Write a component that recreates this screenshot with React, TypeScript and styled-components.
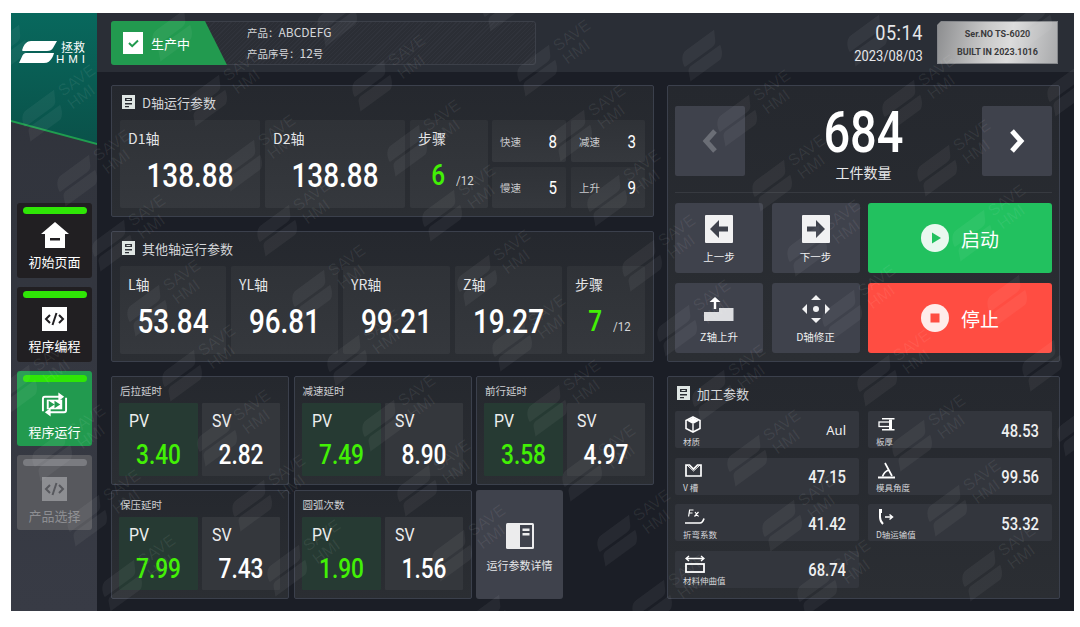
import React from "react";
import styled, { createGlobalStyle } from "styled-components";

const GlobalStyle = createGlobalStyle`
  * { box-sizing: border-box; }
  html, body { margin: 0; padding: 0; background: #fff; }
  body { font-family: "Noto Sans CJK SC", "Noto Sans", sans-serif; }
`;

const NUM = `"Roboto", "Liberation Sans", sans-serif`;
const GREEN_TEXT = "#42f005";

const Frame = styled.div`
  position: relative;
  display: flex;
  width: 1063px;
  height: 598px;
  margin: 13px 0 0 11px;
  overflow: hidden;
  background: #1b1e26;
  color: #fff;
`;

const Sidebar = styled.aside`
  width: 86px;
  flex: none;
  background: linear-gradient(180deg, #2f323a 0%, #383b45 100%);
`;

const SideTopLine = styled.div`
  height: 132px;
  background: #1f9d4f;
  clip-path: polygon(0 0, 100% 0, 100% 100%, 0 82.6%);
`;

const SideTop = styled.div`
  height: 100%;
  padding: 28px 0 0 8px;
  background: linear-gradient(180deg, #08685d 0%, #0a5149 100%);
  clip-path: polygon(0 0, 100% 0, 100% calc(100% - 2px), 0 calc(82.6% - 2px));
`;

const Logo = styled.div`
  display: flex;
  align-items: flex-start;
`;

const LogoText = styled.div`
  display: flex;
  flex-direction: column;
  width: 28px;
  margin-top: -1px;
  align-items: flex-end;
`;

const LogoCn = styled.span`
  font-size: 12px;
  line-height: 14px;
  white-space: nowrap;
`;

const LogoEn = styled.span`
  font-family: "Liberation Sans", sans-serif;
  font-size: 11.5px;
  line-height: 10px;
  letter-spacing: 4px;
  margin-right: -4px;
`;

const NavList = styled.nav`
  display: flex;
  flex-direction: column;
  gap: 9px;
  margin-top: 58px;
  padding-left: 6px;
`;

const NavItem = styled.div<{ $kind: "dark" | "active" | "off" }>`
  width: 75px;
  height: 75px;
  padding-top: 4px;
  border-radius: 3px;
  display: flex;
  flex-direction: column;
  align-items: center;
  background: ${(p) =>
    p.$kind === "active" ? "#229a4f" : p.$kind === "off" ? "#57585d" : "#211f22"};
  color: ${(p) => (p.$kind === "off" ? "#8d8e92" : "#fff")};
`;

const NavBar = styled.div<{ $off?: boolean }>`
  width: 64px;
  height: 7px;
  border-radius: 4px;
  background: ${(p) => (p.$off ? "#7a7b80" : "#2fe606")};
`;

const NavIcon = styled.div<{ $low?: boolean }>`
  height: 27px;
  margin-top: ${(p) => (p.$low ? 9 : 7)}px;
  display: flex;
  align-items: center;
  justify-content: center;
`;

const NavLabel = styled.div`
  font-size: 13px;
  line-height: 16px;
  margin-top: 6px;
`;

const Main = styled.div`
  flex: 1;
  min-width: 0;
`;

const Header = styled.header`
  height: 59px;
  background: #2a2e36;
  display: flex;
  align-items: flex-start;
  padding: 8px 16px 0 14px;
`;

const Status = styled.div`
  width: 425px;
  height: 44px;
  display: flex;
  align-items: center;
  border: 1px solid #3c4049;
  border-radius: 3px;
  background: repeating-linear-gradient(135deg, #30333b 0 1px, #2b2e35 1px 3px);
`;

const StatusTag = styled.div`
  width: 116px;
  height: 44px;
  margin: 0 0 0 -1px;
  padding-left: 12px;
  flex: none;
  display: flex;
  align-items: center;
  gap: 8px;
  font-size: 13px;
  background: #229a4f;
  border-radius: 3px 0 0 3px;
  clip-path: polygon(0 0, 81% 0, 100% 100%, 0 100%);
`;

const Check = styled.div`
  width: 20px;
  height: 22px;
  background: #fff;
  display: flex;
  align-items: center;
  justify-content: center;
`;

const StatusInfo = styled.div`
  margin-left: 20px;
  font-size: 10.5px;
  line-height: 20px;
  color: #d6d7da;
`;

const InfoLatin = styled.span`
  font-size: 12px;
`;

const Clock = styled.div`
  margin-left: auto;
  text-align: right;
  font-family: ${NUM};
  color: #e6e7ea;
`;

const Time = styled.div`
  font-size: 21px;
  line-height: 24px;
  letter-spacing: 0.6px;
  transform: scaleX(0.86);
  transform-origin: right center;
`;

const DateText = styled.div`
  font-size: 15px;
  line-height: 19px;
  margin-top: 2px;
  transform: scaleX(0.86);
  transform-origin: right center;
`;

const Badge = styled.div`
  width: 121px;
  height: 43px;
  margin-left: 14px;
  display: flex;
  flex-direction: column;
  justify-content: center;
  align-items: center;
  font-family: ${NUM};
  font-weight: 700;
  font-size: 9px;
  line-height: 18px;
  color: #3a3a3c;
  border: 1px solid #85878b;
  background: linear-gradient(100deg, #8d8e90 0%, #c9c9c9 40%, #dcdcdc 60%, #a9aaac 100%);
  clip-path: polygon(4px 0, 100% 0, 100% 100%, 0 100%, 0 4px);
`;

const Content = styled.main`
  display: flex;
  gap: 13px;
  padding: 13px 14px 0 14px;
`;

const LeftCol = styled.div`
  width: 543px;
  flex: none;
  display: flex;
  flex-direction: column;
  gap: 14px;
`;

const RightCol = styled.div`
  width: 393px;
  flex: none;
  display: flex;
  flex-direction: column;
  gap: 14px;
`;

const Panel = styled.section<{ $h: number; $pad?: number }>`
  height: ${(p) => p.$h}px;
  padding: 0 ${(p) => p.$pad ?? 8}px;
  border: 1px solid #3b404c;
  border-radius: 2px;
  background: linear-gradient(180deg, #25282e 0%, #2b2e33 100%);
`;

const PanelTitle = styled.h2`
  height: 34px;
  margin: 0;
  padding: 0 0 2px 2px;
  display: flex;
  align-items: center;
  gap: 7px;
  font-size: 13px;
  font-weight: 400;
  color: #d4d6d9;
`;

const AxisRow = styled.div<{ $cols: string }>`
  display: grid;
  grid-template-columns: ${(p) => p.$cols};
  gap: 5px;
  height: 88px;
`;

const Cell = styled.div`
  background: linear-gradient(180deg, #2f3237 0%, #35383d 100%);
  border-radius: 2px;
`;

const AxisCell = styled(Cell)`
  padding: 8px 0 0 8px;
`;

const AxisLabel = styled.div`
  font-size: 14px;
  line-height: 20px;
  color: #e4e5e7;
`;

const AxisValue = styled.div`
  font-family: ${NUM};
  font-weight: 500;
  font-size: 34px;
  line-height: 40px;
  margin: 7px 0 0 -8px;
  text-align: center;
  transform: scaleX(0.82);
`;

const StepValue = styled.div`
  display: flex;
  align-items: baseline;
  margin-top: 7px;
  padding-left: 12px;
  font-family: ${NUM};
  line-height: 40px;
`;

const StepNow = styled.span`
  display: inline-block;
  font-size: 29px;
  font-weight: 500;
  color: ${GREEN_TEXT};
  transform: scaleX(0.84);
`;

const StepAll = styled.span`
  display: inline-block;
  font-size: 13px;
  margin-left: 10px;
  color: #d5d6d8;
  transform: scaleX(0.88);
  transform-origin: left center;
`;

const MiniGrid = styled.div`
  display: grid;
  grid-template-columns: 74px 74px;
  grid-template-rows: 42px 41px;
  gap: 5px;
  margin-left: -1px;
`;

const MiniCell = styled(Cell)`
  display: flex;
  align-items: center;
  justify-content: space-between;
  padding: 0 9px 0 8px;
`;

const MiniLabel = styled.span`
  font-size: 10.5px;
  color: #c9cacd;
`;

const MiniValue = styled.span`
  display: inline-block;
  font-family: ${NUM};
  font-size: 18px;
  transform: scaleX(0.84);
  transform-origin: right center;
`;

const DelayGrid = styled.div`
  display: grid;
  grid-template-columns: repeat(3, 178px);
  grid-template-rows: 109px 109px;
  column-gap: 4.5px;
  row-gap: 5px;
`;

const DelayPanel = styled.section`
  padding: 0 8px 0 7px;
  border: 1px solid #3b404c;
  border-radius: 2px;
  background: linear-gradient(180deg, #25282e 0%, #2b2e33 100%);
`;

const DelayTitle = styled.div`
  height: 26px;
  line-height: 27px;
  padding-left: 1px;
  font-size: 10.5px;
  color: #cfd0d3;
`;

const PairRow = styled.div`
  display: grid;
  grid-template-columns: 79px 78px;
  gap: 4px;
  height: 73px;
`;

const PairCell = styled.div<{ $pv?: boolean }>`
  padding: 7px 0 0 10px;
  border-radius: 1px;
  background: ${(p) => (p.$pv ? "#263a33" : "#34373c")};
`;

const PairLabel = styled.div`
  font-family: ${NUM};
  font-size: 18px;
  line-height: 22px;
  color: #eceded;
  transform: scaleX(0.88);
  transform-origin: left center;
`;

const PairValue = styled.div<{ $pv?: boolean }>`
  font-family: ${NUM};
  font-weight: 500;
  font-size: 27px;
  line-height: 32px;
  margin: 7px 0 0 -10px;
  text-align: center;
  color: ${(p) => (p.$pv ? GREEN_TEXT : "#fff")};
  transform: scaleX(0.84);
`;

const DetailButton = styled.div`
  width: 87px;
  border-radius: 3px;
  background: #3f424c;
  display: flex;
  flex-direction: column;
  align-items: center;
  padding-top: 33px;
  gap: 8px;
  font-size: 11px;
  color: #e6e7e9;
`;

const CountRow = styled.div`
  display: flex;
  justify-content: space-between;
  padding-top: 20px;
  height: 107px;
  border-bottom: 1px solid #373a40;
`;

const ArrowButton = styled.div`
  width: 70px;
  height: 70px;
  border-radius: 2px;
  background: #3f424c;
  display: flex;
  align-items: center;
  justify-content: center;
`;

const CountBlock = styled.div`
  text-align: center;
`;

const CountValue = styled.div`
  font-family: ${NUM};
  font-weight: 500;
  font-size: 58px;
  line-height: 54px;
  margin-top: -1px;
  transform: scaleX(0.81);
`;

const CountLabel = styled.div`
  font-size: 14px;
  line-height: 20px;
  margin-top: 3px;
  color: #e6e7e9;
`;

const ActionGrid = styled.div`
  display: grid;
  grid-template-columns: 88px 88px 184px;
  grid-template-rows: 70px 70px;
  gap: 10px 8.5px;
  margin-top: 10px;
`;

const ToolButton = styled.div`
  border-radius: 3px;
  background: #3f424c;
  display: flex;
  flex-direction: column;
  align-items: center;
  padding-top: 12px;
  gap: 7px;
  font-size: 10.5px;
  line-height: 14px;
  color: #eeeff0;
`;

const ToolIcon = styled.div`
  height: 28px;
  display: flex;
  align-items: center;
  justify-content: center;
`;

const BigButton = styled.div<{ $bg: string }>`
  border-radius: 3px;
  background: ${(p) => p.$bg};
  display: flex;
  align-items: center;
  justify-content: center;
  gap: 12px;
  font-size: 19px;
`;

const ParamGrid = styled.div`
  display: grid;
  grid-template-columns: 184px 184px;
  grid-auto-rows: 37px;
  gap: 9.5px 9px;
`;

const ParamCell = styled.div`
  background: #33363d;
  border-radius: 2px;
  display: flex;
  align-items: center;
  justify-content: space-between;
  padding: 1px 13px 0 8px;
`;

const ParamMeta = styled.div`
  display: flex;
  flex-direction: column;
  align-items: flex-start;
`;

const ParamIcon = styled.div`
  height: 21px;
  margin-left: 2px;
  display: flex;
  align-items: center;
`;

const ParamLabel = styled.div`
  font-size: 8.5px;
  line-height: 12px;
  color: #d6d7da;
`;

const ParamValue = styled.div<{ $text?: boolean }>`
  font-family: ${(p) => (p.$text ? `"Noto Sans", sans-serif` : NUM)};
  font-weight: ${(p) => (p.$text ? 400 : 500)};
  font-size: ${(p) => (p.$text ? "13px" : "18px")};
  color: #eeeff0;
  transform: scaleX(${(p) => (p.$text ? 1 : 0.82)});
  transform-origin: right center;
`;

const Watermarks = styled.div`
  position: absolute;
  inset: 0;
  overflow: hidden;
  pointer-events: none;
`;

const Mark = styled.div`
  position: absolute;
  display: flex;
  align-items: center;
  gap: 3px;
  transform: rotate(-36deg);
  transform-origin: center;
`;

const MarkText = styled.div`
  width: 40px;
  height: 32px;
  font-family: "Liberation Sans", sans-serif;
  font-size: 16px;
  line-height: 16px;
  color: rgba(255, 255, 255, 0.07);
`;

// the two slanted bars of the logo
const SLogo = ({ w, color }: { w: number; color: string }) => (
  <svg width={w} height={(w * 22) / 38} viewBox="0 0 38 22">
    <path
      d="M12 0H38L34 7C33 9 31 10 28 10H4C3 10 3 9 3.5 8C5 3 8 0 12 0Z"
      fill={color}
    />
    <path
      d="M8 12H35C34.5 14 34 15 33 17C31 20 29 22 25 22H0L3.5 14.5C4.5 12.5 6 12 8 12Z"
      fill={color}
    />
  </svg>
);

const HomeIcon = () => (
  <svg width="28" height="26" viewBox="0 0 28 26">
    <path fill="#fff" d="M14 0L28 12H24V26H4V12H0Z" />
    <rect x="9" y="16" width="10" height="2.5" fill="#211f22" />
  </svg>
);

const CodeIcon = ({ bg, fg }: { bg: string; fg: string }) => (
  <svg width="25" height="24" viewBox="0 0 25 24">
    <rect width="25" height="24" fill={bg} />
    <path
      d="M8 8L4 12L8 16M17 8L21 12L17 16M14.5 6L10.5 18"
      fill="none"
      stroke={fg}
      strokeWidth="2"
    />
  </svg>
);

const RunIcon = () => (
  <svg width="27" height="27" viewBox="0 0 28 28">
    <path
      d="M2 21V8C2 6.5 3 6 4 6H20M26 7V20C26 21.5 25 22 24 22H8"
      fill="none"
      stroke="#fff"
      strokeWidth="2"
    />
    <path d="M18 1.5L24 6L18 10.5ZM10 17.5L4 22L10 26.5Z" fill="#fff" />
    <path d="M6 9H22V19H6Z" fill="#fff" />
    <path d="M8 10L14 14L8 18ZM14 10L20 14L14 18Z" fill="#229a4f" />
  </svg>
);

const BoardIcon = () => (
  <svg width="13" height="14" viewBox="0 0 13 14">
    <rect width="13" height="14" fill="#dfe6e4" />
    <path d="M3 3H10V6H3ZM3 8H10V9.5H3ZM3 11H7V12.2H3Z" fill="#2a2d33" />
    <rect x="4.5" y="4" width="4" height="1" fill="#dfe6e4" />
  </svg>
);

const ArrowBox = ({ dir }: { dir: "left" | "right" }) => (
  <svg width="28" height="28" viewBox="0 0 28 28">
    <rect width="28" height="28" rx="1" fill="#f1f1f2" />
    <path
      d={
        dir === "left"
          ? "M5 14L14 5V11.5H23V16.5H14V23Z"
          : "M23 14L14 5V11.5H5V16.5H14V23Z"
      }
      fill="#3f424c"
    />
  </svg>
);

const ZUpIcon = () => (
  <svg width="30" height="24" viewBox="0 0 30 24">
    <path d="M0 15H15V11H29.5V24H0Z" fill="#dcdde0" />
    <path d="M11 0L16.5 5H12.2V12H9.8V5H5.5Z" fill="#fff" />
  </svg>
);

const DPadIcon = () => (
  <svg width="28" height="28" viewBox="0 0 28 28">
    <path
      d="M14 0L19 5H9ZM14 28L9 23H19ZM0 14L5 9V19ZM28 14L23 19V9Z"
      fill="#f1f1f2"
    />
    <circle cx="14" cy="14" r="3" fill="#f1f1f2" />
  </svg>
);

const StartIcon = () => (
  <svg width="28" height="28" viewBox="0 0 28 28">
    <circle cx="14" cy="14" r="14" fill="#e9f8ef" />
    <path d="M11 8.5L20 14L11 19.5Z" fill="#22c15f" />
  </svg>
);

const StopIcon = () => (
  <svg width="28" height="28" viewBox="0 0 28 28">
    <circle cx="14" cy="14" r="14" fill="#ffecea" />
    <rect x="9.5" y="9.5" width="9" height="9" fill="#ff4d42" />
  </svg>
);

const DetailIcon = () => (
  <svg width="28" height="26" viewBox="0 0 28 26">
    <rect width="28" height="26" rx="1.5" fill="#ececed" />
    <rect x="14" y="2" width="12" height="22" fill="#3f424c" />
    <path d="M16.5 5.5H23.5V8H16.5ZM16.5 10H23.5V12.5H16.5Z" fill="#ececed" />
  </svg>
);

const icons: Record<string, React.ReactNode> = {
  cube: (
    <svg width="16" height="17" viewBox="0 0 16 17">
      <path
        d="M8 1L15 4.5V12.5L8 16L1 12.5V4.5Z"
        fill="none"
        stroke="#fff"
        strokeWidth="1.6"
      />
      <path d="M8 1.5L14 4.8L8 8L2 4.8Z" fill="#fff" />
      <path d="M8 8V15.5" stroke="#fff" strokeWidth="1.4" />
    </svg>
  ),
  plate: (
    <svg width="17" height="15" viewBox="0 0 17 15">
      <path d="M4 1H16.5V2.5H4ZM4 12H16.5V13.5H4Z" fill="#fff" />
      <path d="M11 2.5H14V12H11Z" fill="#fff" />
      <rect x="1" y="5" width="12" height="4.5" fill="none" stroke="#fff" strokeWidth="1.3" />
    </svg>
  ),
  groove: (
    <svg width="17" height="13" viewBox="0 0 17 13">
      <path
        d="M1 1H4.5L8.5 5L12.5 1H16V12H1Z"
        fill="none"
        stroke="#fff"
        strokeWidth="1.7"
      />
      <path d="M2 1L8.5 7L15 1" fill="none" stroke="#fff" strokeWidth="1" />
    </svg>
  ),
  angle: (
    <svg width="17" height="17" viewBox="0 0 17 17">
      <path d="M0 14.5H17V16.5H0Z" fill="#fff" />
      <path
        d="M7 1L14 14M10.5 8C8 9 5.5 11.5 4.5 14.5"
        fill="none"
        stroke="#fff"
        strokeWidth="1.7"
      />
    </svg>
  ),
  fx: (
    <svg width="20" height="16" viewBox="0 0 20 16">
      <path
        d="M4 1H8.5M4.6 1L3.6 7.5M4.2 4H7.5M10 3L13.5 7.5M13.5 3L9.5 7.5"
        fill="none"
        stroke="#fff"
        strokeWidth="1.2"
      />
      <path
        d="M0 14H15C17 14 18 12.5 19 9.5"
        fill="none"
        stroke="#fff"
        strokeWidth="1.7"
      />
    </svg>
  ),
  daxis: (
    <svg width="16" height="18" viewBox="0 0 16 18">
      <path
        d="M2 1V9C2 12 3 14 5 16"
        fill="none"
        stroke="#fff"
        strokeWidth="2"
      />
      <path d="M1 1H4V5H1Z" fill="#fff" />
      <path
        d="M7 9H14M11.5 6.5L14.5 9L11.5 11.5"
        fill="none"
        stroke="#fff"
        strokeWidth="1.5"
      />
    </svg>
  ),
  stretch: (
    <svg width="20" height="18" viewBox="0 0 20 18">
      <path
        d="M1 3.5H19M4 1L1 3.5L4 6M16 1L19 3.5L16 6"
        fill="none"
        stroke="#fff"
        strokeWidth="1.4"
      />
      <rect x="1" y="9" width="18" height="8" fill="none" stroke="#fff" strokeWidth="1.8" />
    </svg>
  ),
};

const marks = (() => {
  const list: { x: number; y: number; full: boolean }[] = [];
  // staggered lattice read off the reference, x/y = centre of the words
  for (let i = -5; i < 8; i++) {
    for (let j = -4; j < 10; j++) {
      const x = 729 + i * 165 + j * 35;
      const y = 17 + i * -15 + j * 65;
      if (x > -60 && x < 1120 && y > -40 && y < 660) {
        list.push({ x, y, full: x > 30 && x < 1033 && y > 30 && y < 568 });
      }
    }
  }
  return list;
})();

const delays = [
  { title: "后拉延时", pv: "3.40", sv: "2.82" },
  { title: "减速延时", pv: "7.49", sv: "8.90" },
  { title: "前行延时", pv: "3.58", sv: "4.97" },
  { title: "保压延时", pv: "7.99", sv: "7.43" },
  { title: "圆弧次数", pv: "1.90", sv: "1.56" },
];

const params = [
  { icon: "cube", label: "材质", value: "Aul", text: true },
  { icon: "plate", label: "板厚", value: "48.53" },
  { icon: "groove", label: "V 槽", value: "47.15" },
  { icon: "angle", label: "模具角度", value: "99.56" },
  { icon: "fx", label: "折弯系数", value: "41.42" },
  { icon: "daxis", label: "D轴运输值", value: "53.32" },
  { icon: "stretch", label: "材料伸曲值", value: "68.74" },
];

const Step = ({ now }: { now: string }) => (
  <AxisCell>
    <AxisLabel>步骤</AxisLabel>
    <StepValue>
      <StepNow>{now}</StepNow>
      <StepAll>/12</StepAll>
    </StepValue>
  </AxisCell>
);

const Axis = ({ label, value }: { label: string; value: string }) => (
  <AxisCell>
    <AxisLabel>{label}</AxisLabel>
    <AxisValue>{value}</AxisValue>
  </AxisCell>
);

export default function App() {
  return (
    <>
      <GlobalStyle />
      <Frame>
        <Sidebar>
          <SideTopLine>
            <SideTop>
              <Logo>
                <SLogo w={38} color="#fff" />
                <LogoText>
                  <LogoCn>拯救</LogoCn>
                  <LogoEn>HMI</LogoEn>
                </LogoText>
              </Logo>
            </SideTop>
          </SideTopLine>
          <NavList>
            <NavItem $kind="dark">
              <NavBar />
              <NavIcon>
                <HomeIcon />
              </NavIcon>
              <NavLabel>初始页面</NavLabel>
            </NavItem>
            <NavItem $kind="dark">
              <NavBar />
              <NavIcon>
                <CodeIcon bg="#fff" fg="#211f22" />
              </NavIcon>
              <NavLabel>程序编程</NavLabel>
            </NavItem>
            <NavItem $kind="active">
              <NavBar />
              <NavIcon $low>
                <RunIcon />
              </NavIcon>
              <NavLabel>程序运行</NavLabel>
            </NavItem>
            <NavItem $kind="off">
              <NavBar $off />
              <NavIcon $low>
                <CodeIcon bg="#8d8e92" fg="#57585d" />
              </NavIcon>
              <NavLabel>产品选择</NavLabel>
            </NavItem>
          </NavList>
        </Sidebar>

        <Main>
          <Header>
            <Status>
              <StatusTag>
                <Check>
                  <svg width="11" height="9" viewBox="0 0 11 9">
                    <path d="M1 4L4.2 7.2L10 1.5" fill="none" stroke="#229a4f" strokeWidth="2" />
                  </svg>
                </Check>
                生产中
              </StatusTag>
              <StatusInfo>
                <div>
                  产品：<InfoLatin>ABCDEFG</InfoLatin>
                </div>
                <div>
                  产品序号：<InfoLatin>12</InfoLatin>号
                </div>
              </StatusInfo>
            </Status>
            <Clock>
              <Time>05:14</Time>
              <DateText>2023/08/03</DateText>
            </Clock>
            <Badge>
              <div>Ser.NO TS-6020</div>
              <div>BUILT IN 2023.1016</div>
            </Badge>
          </Header>

          <Content>
            <LeftCol>
              <Panel $h={132}>
                <PanelTitle>
                  <BoardIcon />
                  D轴运行参数
                </PanelTitle>
                <AxisRow $cols="140px 140px 78px auto">
                  <Axis label="D1轴" value="138.88" />
                  <Axis label="D2轴" value="138.88" />
                  <Step now="6" />
                  <MiniGrid>
                    <MiniCell>
                      <MiniLabel>快速</MiniLabel>
                      <MiniValue>8</MiniValue>
                    </MiniCell>
                    <MiniCell>
                      <MiniLabel>减速</MiniLabel>
                      <MiniValue>3</MiniValue>
                    </MiniCell>
                    <MiniCell>
                      <MiniLabel>慢速</MiniLabel>
                      <MiniValue>5</MiniValue>
                    </MiniCell>
                    <MiniCell>
                      <MiniLabel>上升</MiniLabel>
                      <MiniValue>9</MiniValue>
                    </MiniCell>
                  </MiniGrid>
                </AxisRow>
              </Panel>

              <Panel $h={131}>
                <PanelTitle>
                  <BoardIcon />
                  其他轴运行参数
                </PanelTitle>
                <AxisRow $cols="106px 107px 107px 107px 78px">
                  <Axis label="L轴" value="53.84" />
                  <Axis label="YL轴" value="96.81" />
                  <Axis label="YR轴" value="99.21" />
                  <Axis label="Z轴" value="19.27" />
                  <Step now="7" />
                </AxisRow>
              </Panel>

              <DelayGrid>
                {delays.map((d) => (
                  <DelayPanel key={d.title}>
                    <DelayTitle>{d.title}</DelayTitle>
                    <PairRow>
                      <PairCell $pv>
                        <PairLabel>PV</PairLabel>
                        <PairValue $pv>{d.pv}</PairValue>
                      </PairCell>
                      <PairCell>
                        <PairLabel>SV</PairLabel>
                        <PairValue>{d.sv}</PairValue>
                      </PairCell>
                    </PairRow>
                  </DelayPanel>
                ))}
                <DetailButton>
                  <DetailIcon />
                  运行参数详情
                </DetailButton>
              </DelayGrid>
            </LeftCol>

            <RightCol>
              <Panel $h={277} $pad={7}>
                <CountRow>
                  <ArrowButton>
                    <svg width="16" height="24" viewBox="0 0 16 24">
                      <path d="M13 2L4 12L13 22" fill="none" stroke="#6b6e76" strokeWidth="5" />
                    </svg>
                  </ArrowButton>
                  <CountBlock>
                    <CountValue>684</CountValue>
                    <CountLabel>工件数量</CountLabel>
                  </CountBlock>
                  <ArrowButton>
                    <svg width="16" height="24" viewBox="0 0 16 24">
                      <path d="M3 2L12 12L3 22" fill="none" stroke="#fff" strokeWidth="5" />
                    </svg>
                  </ArrowButton>
                </CountRow>
                <ActionGrid>
                  <ToolButton>
                    <ToolIcon>
                      <ArrowBox dir="left" />
                    </ToolIcon>
                    上一步
                  </ToolButton>
                  <ToolButton>
                    <ToolIcon>
                      <ArrowBox dir="right" />
                    </ToolIcon>
                    下一步
                  </ToolButton>
                  <BigButton $bg="#22c15f">
                    <StartIcon />
                    启动
                  </BigButton>
                  <ToolButton>
                    <ToolIcon>
                      <ZUpIcon />
                    </ToolIcon>
                    Z轴上升
                  </ToolButton>
                  <ToolButton>
                    <ToolIcon>
                      <DPadIcon />
                    </ToolIcon>
                    D轴修正
                  </ToolButton>
                  <BigButton $bg="#ff4d42">
                    <StopIcon />
                    停止
                  </BigButton>
                </ActionGrid>
              </Panel>

              <Panel $h={223} $pad={7}>
                <PanelTitle>
                  <BoardIcon />
                  加工参数
                </PanelTitle>
                <ParamGrid>
                  {params.map((p) => (
                    <ParamCell key={p.label}>
                      <ParamMeta>
                        <ParamIcon>{icons[p.icon]}</ParamIcon>
                        <ParamLabel>{p.label}</ParamLabel>
                      </ParamMeta>
                      <ParamValue $text={p.text}>{p.value}</ParamValue>
                    </ParamCell>
                  ))}
                </ParamGrid>
              </Panel>
            </RightCol>
          </Content>
        </Main>

        <Watermarks>
          {marks.map((m) => (
            <Mark key={`${m.x}-${m.y}`} style={{ left: m.x - 67, top: m.y - 3 }}>
              <SLogo w={50} color="rgba(255,255,255,0.05)" />
              <MarkText>
                {m.full && (
                  <>
                    SAVE
                    <br />
                    HMI
                  </>
                )}
              </MarkText>
            </Mark>
          ))}
        </Watermarks>
      </Frame>
    </>
  );
}
